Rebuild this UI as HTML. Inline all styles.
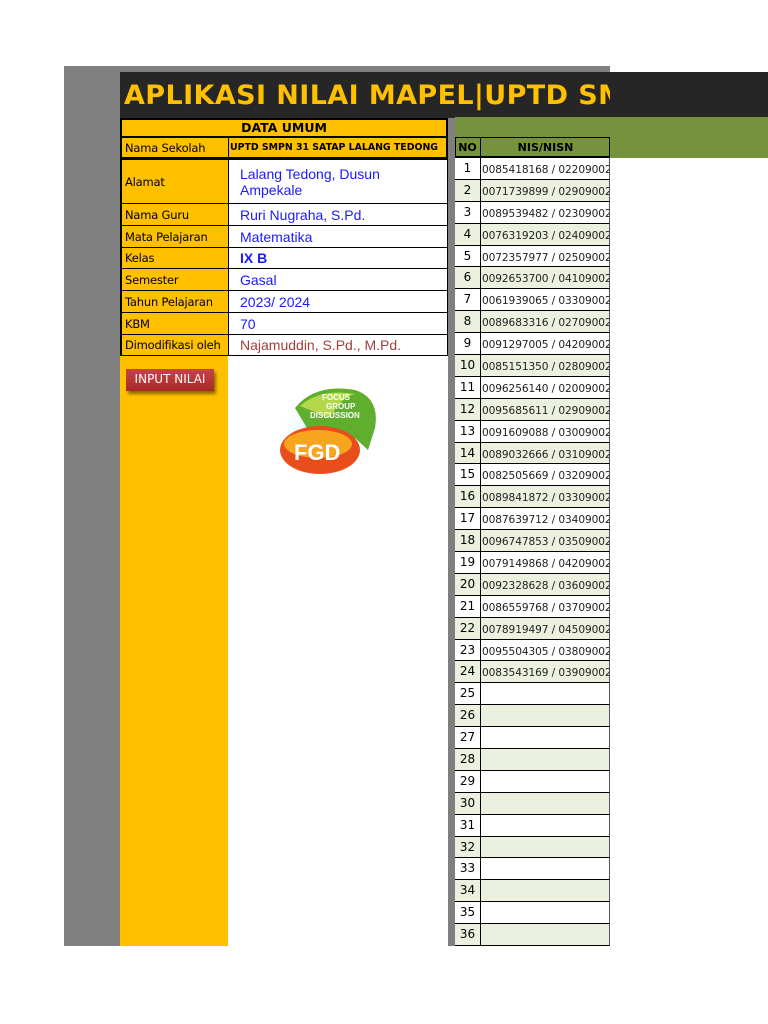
<!DOCTYPE html>
<html><head><meta charset="utf-8"><style>
*{margin:0;padding:0;box-sizing:border-box}
body{width:768px;height:1024px;background:#fff;position:relative;overflow:hidden;font-family:"DejaVu Sans","Liberation Sans",sans-serif}
.a{position:absolute}
.lab{position:absolute;left:120px;width:108px;font-size:11.5px;letter-spacing:-0.2px;white-space:nowrap;color:#000;padding-left:3px;display:flex;align-items:center;border-top:1px solid #000;border-left:2px solid #000}
.val{position:absolute;left:228px;width:220px;font-family:"Liberation Sans",sans-serif;font-size:14px;color:#1a1aff;padding-left:11px;display:flex;align-items:center;background:#fff;border:1px solid #000;border-bottom:none}
.no{position:absolute;left:455px;width:26px;text-align:center;font-size:12px;color:#000;border-bottom:1px solid #000;border-right:1px solid #000}
.ni{position:absolute;left:481px;width:129px;font-size:10.6px;letter-spacing:-0.1px;color:#222;overflow:hidden;white-space:nowrap;border-bottom:1px solid #000;border-right:1px solid #555;padding-left:1px}
</style></head><body>
<div class="a" style="left:64px;top:66px;width:546px;height:880px;background:#808080"></div>
<div class="a" style="left:120px;top:72px;width:648px;height:46px;background:#262626"></div>
<div class="a" style="left:124px;top:78px;width:486px;height:36px;overflow:hidden;color:#ffc000;font-weight:bold;font-size:27px;letter-spacing:0.4px;white-space:nowrap;line-height:36px">APLIKASI NILAI MAPEL|UPTD SMPN 31 SATAP</div>
<div class="a" style="left:120px;top:118px;width:108px;height:828px;background:#ffc000"></div>
<div class="a" style="left:228px;top:138px;width:220px;height:808px;background:#fff"></div>
<div class="a" style="left:448px;top:118px;width:6px;height:828px;background:#7f7f7f"></div>
<div class="a" style="left:455px;top:117px;width:313px;height:41px;background:#77923c"></div>
<div class="a" style="left:455px;top:158px;width:155px;height:788px;background:#fff"></div>
<div class="a" style="left:120px;top:118px;width:328px;height:20px;background:#ffc000;border:2px solid #000;text-align:center;font-size:12.5px;font-weight:bold;line-height:16px;color:#000">DATA UMUM</div>
<div class="lab" style="top:138px;height:20px;border-top:none">Nama Sekolah</div>
<div class="a" style="left:228px;top:138px;width:220px;height:20px;background:#ffc000;border-left:1px solid #000;border-right:2px solid #000;font-size:9.4px;font-weight:bold;line-height:19px;padding-left:1px;white-space:nowrap;overflow:hidden">UPTD SMPN 31 SATAP LALANG TEDONG</div>
<div class="a" style="left:120px;top:157px;width:328px;height:3px;background:#000"></div>
<div class="lab" style="top:160px;height:43px;border-top:none">Alamat</div>
<div class="val" style="top:160px;height:43px;line-height:16px;border-top:none">Lalang Tedong, Dusun<br>Ampekale</div>
<div class="lab" style="top:203px;height:22px">Nama Guru</div>
<div class="val" style="top:203px;height:22px">Ruri Nugraha, S.Pd.</div>
<div class="lab" style="top:225px;height:22px">Mata Pelajaran</div>
<div class="val" style="top:225px;height:22px">Matematika</div>
<div class="lab" style="top:247px;height:21px">Kelas</div>
<div class="val" style="top:247px;height:21px;font-weight:bold">IX B</div>
<div class="lab" style="top:268px;height:22px">Semester</div>
<div class="val" style="top:268px;height:22px">Gasal</div>
<div class="lab" style="top:290px;height:22px">Tahun Pelajaran</div>
<div class="val" style="top:290px;height:22px">2023/ 2024</div>
<div class="lab" style="top:312px;height:22px">KBM</div>
<div class="val" style="top:312px;height:22px">70</div>
<div class="lab" style="top:334px;height:22px;border-bottom:1px solid #000">Dimodifikasi oleh</div>
<div class="val" style="top:334px;height:22px;color:#a0403a;border-bottom:1px solid #000">Najamuddin, S.Pd., M.Pd.</div>
<div class="a" style="left:126px;top:369px;width:88px;height:22px;background:linear-gradient(#c84444,#a82828);color:#fff;font-size:12px;text-align:center;line-height:20px;box-shadow:2px 3px 3px rgba(0,0,0,.45)">INPUT NILAI</div>
<svg class="a" style="left:270px;top:378px" width="120" height="100">
<defs><radialGradient id="g" cx=".5" cy=".5" r=".5"><stop offset="0" stop-color="#bfe6ff"/><stop offset="1" stop-color="#fff" stop-opacity="0"/></radialGradient></defs>
<ellipse cx="60" cy="55" rx="58" ry="45" fill="url(#g)"/>
<path d="M25 30 Q45 5 85 12 Q110 20 105 50 L98 72 L85 60 Q60 70 40 55 Z" fill="#5fae2e"/>
<path d="M30 28 Q50 10 85 16 Q70 20 60 40 Z" fill="#b3d94a"/>
<ellipse cx="50" cy="72" rx="40" ry="24" fill="#e84d1c"/>
<ellipse cx="48" cy="66" rx="34" ry="14" fill="#f7a51e"/>
<text x="24" y="82" font-family="Liberation Sans" font-weight="bold" font-size="22" fill="#fff">FGD</text>
<text x="52" y="22" font-family="Liberation Sans" font-weight="bold" font-size="8" fill="#fff">FOCUS</text>
<text x="56" y="31" font-family="Liberation Sans" font-weight="bold" font-size="8" fill="#fff">GROUP</text>
<text x="40" y="40" font-family="Liberation Sans" font-weight="bold" font-size="8" fill="#fff">DISCUSSION</text>
</svg>
<div class="a" style="left:455px;top:137px;width:155px;height:21px;border:1px solid #000;border-bottom:2px solid #000"></div>
<div class="a" style="left:455px;top:138px;width:26px;height:20px;font-size:11px;font-weight:bold;text-align:center;line-height:19px;border-right:1px solid #000">NO</div>
<div class="a" style="left:481px;top:138px;width:129px;height:20px;font-size:11px;font-weight:bold;text-align:center;line-height:19px">NIS/NISN</div>
<div id="rows"></div>
<script>
var n=["0085418168 / 02209002","0071739899 / 02909002","0089539482 / 02309002","0076319203 / 02409002","0072357977 / 02509002","0092653700 / 04109002","0061939065 / 03309002","0089683316 / 02709002","0091297005 / 04209002","0085151350 / 02809002","0096256140 / 02009002","0095685611 / 02909002","0091609088 / 03009002","0089032666 / 03109002","0082505669 / 03209002","0089841872 / 03309002","0087639712 / 03409002","0096747853 / 03509002","0079149868 / 04209002","0092328628 / 03609002","0086559768 / 03709002","0078919497 / 04509002","0095504305 / 03809002","0083543169 / 03909002"];
var h="";for(var i=0;i<36;i++){var t=158+i*788/36,bg=i%2?"#ebf1de":"#fff";
h+='<div class="no" style="top:'+t+'px;height:21.9px;line-height:20px;background:'+bg+'">'+(i+1)+'</div>';
h+='<div class="ni" style="top:'+t+'px;height:21.9px;line-height:24px;background:'+bg+'">'+(n[i]||"")+'</div>';}
document.getElementById("rows").innerHTML=h;
</script>
</body></html>
